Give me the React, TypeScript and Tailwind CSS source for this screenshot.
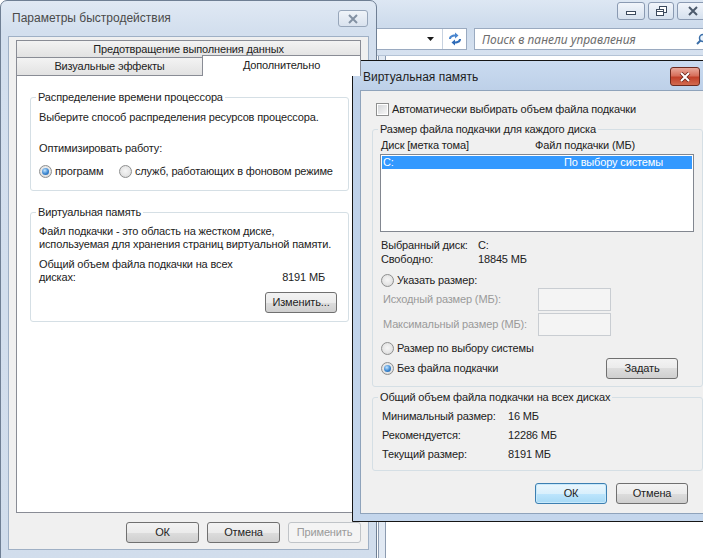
import React from "react";

const btnBase = "h-[21px] rounded-[3px] border flex items-center justify-center shrink-0";
const btnNormal =
  "border-[#707070] bg-[linear-gradient(180deg,#f3f3f3_0%,#ebebeb_50%,#dddddd_50%,#cfcfcf_100%)] text-[#1e1e1e]";
const btnFocus =
  "border-[#3c7fb1] bg-[linear-gradient(180deg,#eaf6fd_0%,#d9f0fc_50%,#bee6fd_50%,#a7d9f5_100%)] text-[#1e1e1e] shadow-[inset_0_0_0_1px_#c8e9fb]";
const btnDisabled = "border-[#c0c4c8] bg-[#f4f4f4] text-[#9a9a9a]";

function Radio({ checked }: { checked?: boolean }) {
  return (
    <span className="w-[13px] h-[13px] rounded-full border border-[#8e8f8f] bg-[radial-gradient(circle_at_50%_45%,#f6f6f6_0%,#e6e6e6_55%,#cfcfcf_100%)] flex items-center justify-center shrink-0">
      {checked && (
        <span className="w-[7px] h-[7px] rounded-full bg-[radial-gradient(circle_at_40%_35%,#c4e6ff_0%,#3b86d0_55%,#1c5a9c_100%)]" />
      )}
    </span>
  );
}

function Check() {
  return (
    <span className="w-[13px] h-[13px] border border-[#8e8f8f] bg-white p-px shrink-0">
      <span className="block w-full h-full bg-[linear-gradient(135deg,#d4d6d9,#f6f6f6)]" />
    </span>
  );
}

function XIcon({ color, outline }: { color: string; outline?: string }) {
  return (
    <svg width="12" height="10" viewBox="0 0 12 10">
      {outline && <path d="M2 1L10 9M10 1L2 9" stroke={outline} strokeWidth="3.6" />}
      <path d="M2 1L10 9M10 1L2 9" stroke={color} strokeWidth="2" />
    </svg>
  );
}

function Fieldset({
  legend,
  className,
  children,
}: {
  legend: string;
  className: string;
  children: React.ReactNode;
}) {
  return (
    <fieldset className={`min-w-0 border border-[#d5dfe5] rounded-[3px] px-[8px] ${className}`}>
      <legend className="-ml-[3px] px-[2px] leading-[13px]">{legend}</legend>
      {children}
    </fieldset>
  );
}

function ControlPanel() {
  return (
    <div className="absolute left-[370px] top-0 w-[345px] h-[558px] bg-white flex flex-col">
      <div className="h-[56px] border-b border-[#b4c3d6] bg-[linear-gradient(180deg,#dde7f3_0px,#cddbec_26px,#d7e2f0_56px)] flex flex-col">
        <div className="h-[28px] flex items-start gap-[3px] pl-[247px] pt-[2px]">
          <div className="w-[28px] h-[18px] rounded-[3px] border border-[#8a9ab2] bg-[linear-gradient(180deg,#f1f5fb,#d6e1ee)] flex items-end justify-center pb-[4px]">
            <span className="w-[10px] h-[4px] border border-[#3c4a5d] bg-white" />
          </div>
          <div className="w-[26px] h-[18px] rounded-[3px] border border-[#8a9ab2] bg-[linear-gradient(180deg,#f1f5fb,#d6e1ee)] flex items-center justify-center">
            <svg width="11" height="10" viewBox="0 0 11 10">
              <rect x="3.5" y="0.5" width="7" height="6" fill="#fff" stroke="#3c4a5d" />
              <rect x="0.5" y="3.5" width="7" height="6" fill="#fff" stroke="#3c4a5d" />
              <path d="M1 5.5H7" stroke="#3c4a5d" />
            </svg>
          </div>
          <div className="w-[34px] h-[18px] rounded-[3px] border border-[#8a9ab2] bg-[linear-gradient(180deg,#f1f5fb,#d6e1ee)] flex items-center pl-[9px]">
            <XIcon color="#4c5a6c" />
          </div>
        </div>
        <div className="h-[22px] flex gap-[7px]">
          <div className="w-[97px] h-[22px] border border-[#9aaac0] bg-white flex items-center">
            <div className="flex-1" />
            <div className="w-[12px] flex justify-center">
              <svg width="7" height="4" viewBox="0 0 7 4">
                <path d="M0 0H7L3.5 4Z" fill="#1a1a1a" />
              </svg>
            </div>
            <span className="ml-[6px] w-px h-[20px] bg-[#c7d2e0]" />
            <div className="w-[23px] flex justify-center">
              <svg width="16" height="14" viewBox="0 0 16 14">
                <path d="M2 7C2 4 4.5 2.5 8 2.5V0.5L11.5 3.5L8 6.5V4.5C5.5 4.5 4 5.5 4 7Z" fill="#4a86cf" />
                <path d="M14 7C14 10 11.5 11.5 8 11.5V13.5L4.5 10.5L8 7.5V9.5C10.5 9.5 12 8.5 12 7Z" fill="#2e6bb8" />
              </svg>
            </div>
          </div>
          <div className="w-[241px] h-[22px] border border-[#9aaac0] bg-white flex items-center justify-between pl-[7px] pr-[6px]">
            <span className="font-['Noto_Sans',sans-serif] italic text-[12px] tracking-normal text-[#6d6d6d]">
              Поиск в панели управления
            </span>
            <svg width="12" height="12" viewBox="0 0 12 12">
              <circle cx="7" cy="5" r="3.5" fill="#eaf3fc" stroke="#3a6ea8" strokeWidth="1.5" />
              <path d="M4.5 7.5L1 11" stroke="#3a6ea8" strokeWidth="2" />
            </svg>
          </div>
        </div>
      </div>
      <div className="flex-1 flex">
        <div className="ml-[8px] w-[8px] border-x border-[#8c9bb0] bg-[#e1e9f3]" />
      </div>
    </div>
  );
}

function PerfDialog() {
  return (
    <div className="absolute left-0 top-0 w-[377px] h-[575px] rounded-t-[7px] border border-[#6f7f94] bg-[linear-gradient(180deg,#e0e9f4_0px,#d3dfee_30px,#d1ddec_100%)] px-[7px] flex flex-col">
      <div className="h-[35px] flex items-start justify-between">
        <span className="mt-[9px] ml-[4px] text-[12px] tracking-normal leading-[16px] text-[#4a4a4a]">
          Параметры быстродействия
        </span>
        <div className="mt-[9px] mr-[1px] w-[30px] h-[17px] rounded-[3px] border border-[#97a6ba] bg-[linear-gradient(180deg,#f0f4f9,#d9e2ee)] flex items-center justify-center">
          <XIcon color="#8391a3" />
        </div>
      </div>
      <div className="h-[514px] border border-[#9fb0c5] bg-[#f0f0f0] px-[7px] pt-[3px] flex flex-col">
        <div className="h-[18px] border border-[#898c95] bg-[linear-gradient(180deg,#f3f3f3,#e2e2e2)] flex items-center justify-center">
          Предотвращение выполнения данных
        </div>
        <div className="h-[18px] -mt-px flex">
          <div className="w-[187px] border border-b-0 border-[#898c95] bg-[linear-gradient(180deg,#f3f3f3,#e2e2e2)] flex items-center justify-center">
            Визуальные эффекты
          </div>
          <div className="relative z-10 flex-1 -ml-px -mt-[2px] h-[21px] border border-b-0 border-[#898c95] bg-white flex items-center justify-center pb-[1px]">
            Дополнительно
          </div>
        </div>
        <div className="h-[438px] border border-[#898c95] bg-white pl-[13px] pr-[11px] pt-[15px] flex flex-col">
          <Fieldset legend="Распределение времени процессора" className="pb-[12px]">
            <div className="mt-[7px]">Выберите способ распределения ресурсов процессора.</div>
            <div className="mt-[18px]">Оптимизировать работу:</div>
            <div className="mt-[10px] h-[13px] flex items-center">
              <div className="w-[80px] flex items-center gap-[3px]">
                <Radio checked />
                <span>программ</span>
              </div>
              <div className="flex items-center gap-[3px]">
                <Radio />
                <span>служб, работающих в фоновом режиме</span>
              </div>
            </div>
          </Fieldset>
          <Fieldset legend="Виртуальная память" className="mt-[15px] pb-[8px]">
            <div className="mt-[6px]">Файл подкачки - это область на жестком диске,</div>
            <div>используемая для хранения страниц виртуальной памяти.</div>
            <div className="mt-[7px]">Общий объем файла подкачки на всех</div>
            <div className="flex justify-between pr-[15px]">
              <span>дисках:</span>
              <span>8191 МБ</span>
            </div>
            <div className="mt-[8px] flex justify-end pr-[3px]">
              <div className={`${btnBase} ${btnNormal} w-[72px]`}>Изменить...</div>
            </div>
          </Fieldset>
        </div>
        <div className="mt-[9px] flex justify-end gap-[8px]">
          <div className={`${btnBase} ${btnNormal} w-[73px]`}>ОК</div>
          <div className={`${btnBase} ${btnNormal} w-[73px]`}>Отмена</div>
          <div className={`${btnBase} ${btnDisabled} w-[73px]`}>Применить</div>
        </div>
      </div>
    </div>
  );
}

function VmDialog() {
  return (
    <div className="absolute left-[352px] top-[60px] w-[360px] h-[462px] rounded-t-[6px] border border-[#151515] bg-[linear-gradient(180deg,#cadbf0_0px,#bdd0e8_30px,#c4d6ec_100%)] px-[7px] flex flex-col">
      <div className="h-[29px] flex items-start justify-between">
        <span className="mt-[8px] ml-[3px] text-[12px] tracking-normal leading-[16px] text-[#1e1e1e]">
          Виртуальная память
        </span>
        <div className="mt-[6px] mr-[4px] w-[30px] h-[19px] rounded-[3px] border border-[#6d2a1f] bg-[linear-gradient(180deg,#e9a99b_0%,#d7705c_45%,#c2412a_55%,#d26a4f_100%)] flex items-center justify-center">
          <XIcon color="#ffffff" outline="#6b2418" />
        </div>
      </div>
      <div className="h-[424px] border border-[#8fa3bb] bg-[#f0f0f0] pt-[12px] flex flex-col">
        <div className="h-[13px] ml-[15px] flex items-center gap-[3px]">
          <Check />
          <span>Автоматически выбирать объем файла подкачки</span>
        </div>
        <Fieldset legend="Размер файла подкачки для каждого диска" className="mt-[7px] ml-[11px] w-[331px] pb-[7px]">
          <div className="mt-[3px] h-[13px] flex">
            <span className="w-[154px]">Диск [метка тома]</span>
            <span>Файл подкачки (МБ)</span>
          </div>
          <div className="mt-[2px] -ml-px w-[314px] h-[78px] border border-[#828790] bg-white p-px">
            <div className="h-[13px] bg-[#3399ff] text-white flex">
              <span className="w-[182px] pl-px">C:</span>
              <span>По выбору системы</span>
            </div>
          </div>
          <div className="mt-[6px] leading-[14px]">
            <div className="flex">
              <span className="w-[97px]">Выбранный диск:</span>
              <span>C:</span>
            </div>
            <div className="flex">
              <span className="w-[97px]">Свободно:</span>
              <span>18845 МБ</span>
            </div>
          </div>
          <div className="mt-[8px] h-[13px] flex items-center gap-[3px]">
            <Radio />
            <span>Указать размер:</span>
          </div>
          <div className="mt-px h-[23px] flex items-center">
            <span className="w-[157px] pl-[2px] text-[#9a9a9a]">Исходный размер (МБ):</span>
            <div className="w-[73px] h-[23px] border border-[#c9cdd2] bg-[#f4f4f4]" />
          </div>
          <div className="mt-[2px] h-[23px] flex items-center">
            <span className="w-[157px] pl-[2px] text-[#9a9a9a]">Максимальный размер (МБ):</span>
            <div className="w-[73px] h-[23px] border border-[#c9cdd2] bg-[#f4f4f4]" />
          </div>
          <div className="mt-[6px] h-[13px] flex items-center gap-[3px]">
            <Radio />
            <span>Размер по выбору системы</span>
          </div>
          <div className="mt-[3px] h-[21px] flex items-center">
            <div className="w-[225px] flex items-center gap-[3px]">
              <Radio checked />
              <span>Без файла подкачки</span>
            </div>
            <div className={`${btnBase} ${btnNormal} w-[72px]`}>Задать</div>
          </div>
        </Fieldset>
        <Fieldset legend="Общий объем файла подкачки на всех дисках" className="mt-[4px] ml-[11px] w-[331px] pb-[6px]">
          <div className="mt-[3px] leading-[19px]">
            <div className="flex">
              <span className="w-[127px] shrink-0 pl-px">Минимальный размер:</span>
              <span>16 МБ</span>
            </div>
            <div className="flex">
              <span className="w-[127px] shrink-0 pl-px">Рекомендуется:</span>
              <span>12286 МБ</span>
            </div>
            <div className="flex">
              <span className="w-[127px] shrink-0 pl-px">Текущий размер:</span>
              <span>8191 МБ</span>
            </div>
          </div>
        </Fieldset>
        <div className="mt-[12px] ml-[174px] flex gap-[9px]">
          <div className={`${btnBase} ${btnFocus} w-[72px]`}>ОК</div>
          <div className={`${btnBase} ${btnNormal} w-[72px]`}>Отмена</div>
        </div>
      </div>
    </div>
  );
}

export default function App() {
  return (
    <div className="relative w-[703px] h-[558px] overflow-hidden whitespace-nowrap bg-white font-['Liberation_Sans',Arial,sans-serif] text-[11px] tracking-[-0.15px] leading-[13px] text-[#222222]">
      <ControlPanel />
      <PerfDialog />
      <VmDialog />
    </div>
  );
}
